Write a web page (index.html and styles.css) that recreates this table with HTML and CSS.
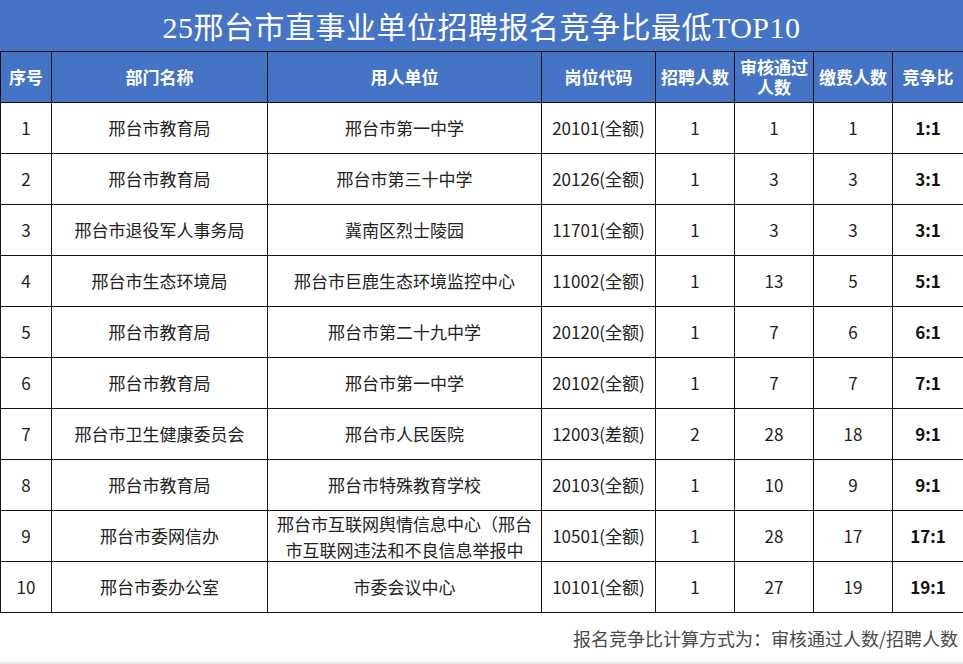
FILE: index.html
```html
<!DOCTYPE html>
<html lang="zh-CN">
<head>
<meta charset="utf-8">
<title>25邢台市直事业单位招聘报名竞争比最低TOP10</title>
<link rel="stylesheet" href="styles.css">
</head>
<body>
<div class="page">
  <div class="title">25邢台市直事业单位招聘报名竞争比最低TOP10</div>
  <table class="grid">
    <colgroup>
      <col class="c1"><col class="c2"><col class="c3"><col class="c4">
      <col class="c5"><col class="c6"><col class="c7"><col class="c8">
    </colgroup>
    <thead>
      <tr>
        <th>序号</th><th>部门名称</th><th>用人单位</th><th>岗位代码</th>
        <th>招聘人数</th><th>审核通过人数</th><th>缴费人数</th><th>竞争比</th>
      </tr>
    </thead>
    <tbody>
      <tr><td>1</td><td>邢台市教育局</td><td>邢台市第一中学</td><td>20101(全额)</td><td>1</td><td>1</td><td>1</td><td class="ratio">1:1</td></tr>
      <tr><td>2</td><td>邢台市教育局</td><td>邢台市第三十中学</td><td>20126(全额)</td><td>1</td><td>3</td><td>3</td><td class="ratio">3:1</td></tr>
      <tr><td>3</td><td>邢台市退役军人事务局</td><td>冀南区烈士陵园</td><td>11701(全额)</td><td>1</td><td>3</td><td>3</td><td class="ratio">3:1</td></tr>
      <tr><td>4</td><td>邢台市生态环境局</td><td>邢台市巨鹿生态环境监控中心</td><td>11002(全额)</td><td>1</td><td>13</td><td>5</td><td class="ratio">5:1</td></tr>
      <tr><td>5</td><td>邢台市教育局</td><td>邢台市第二十九中学</td><td>20120(全额)</td><td>1</td><td>7</td><td>6</td><td class="ratio">6:1</td></tr>
      <tr><td>6</td><td>邢台市教育局</td><td>邢台市第一中学</td><td>20102(全额)</td><td>1</td><td>7</td><td>7</td><td class="ratio">7:1</td></tr>
      <tr><td>7</td><td>邢台市卫生健康委员会</td><td>邢台市人民医院</td><td>12003(差额)</td><td>2</td><td>28</td><td>18</td><td class="ratio">9:1</td></tr>
      <tr><td>8</td><td>邢台市教育局</td><td>邢台市特殊教育学校</td><td>20103(全额)</td><td>1</td><td>10</td><td>9</td><td class="ratio">9:1</td></tr>
      <tr><td>9</td><td>邢台市委网信办</td><td><div class="clip">邢台市互联网舆情信息中心（邢台市互联网违法和不良信息举报中</div></td><td>10501(全额)</td><td>1</td><td>28</td><td>17</td><td class="ratio">17:1</td></tr>
      <tr><td>10</td><td>邢台市委办公室</td><td>市委会议中心</td><td>10101(全额)</td><td>1</td><td>27</td><td>19</td><td class="ratio">19:1</td></tr>
    </tbody>
  </table>
  <div class="note">报名竞争比计算方式为：审核通过人数/招聘人数</div>
</div>
</body>
</html>
```

FILE: styles.css
```css
html, body {
  margin: 0;
  padding: 0;
  background: #ffffff;
}

.page {
  width: 963px;
  height: 664px;
  box-sizing: border-box;
  border-bottom: 2px solid #e6e6e6;
  display: flex;
  flex-direction: column;
  font-family: "Noto Sans CJK SC", "Noto Sans", sans-serif;
}

.title {
  height: 51px;
  background: #4573c5;
  color: #ffffff;
  font-family: "Liberation Serif", "Noto Sans CJK SC", serif;
  font-size: 30px;
  letter-spacing: 0.5px;
  line-height: 56px;
  text-align: center;
  white-space: nowrap;
}

.grid {
  width: 963px;
  table-layout: fixed;
  border-collapse: collapse;
}

.c1 { width: 51px; }
.c2 { width: 216px; }
.c3 { width: 274px; }
.c4 { width: 114px; }
.c5 { width: 79px; }
.c6 { width: 79px; }
.c7 { width: 79px; }
.c8 { width: 71px; }

.grid th,
.grid td {
  border: 1px solid #111111;
  height: 50px;
  padding: 0 2px;
  text-align: center;
  vertical-align: middle;
}

.grid th {
  background: #4573c5;
  color: #ffffff;
  font-size: 17px;
  font-weight: bold;
  line-height: 20px;
}

.grid td {
  color: #222222;
  font-size: 17px;
  line-height: 22px;
}

.grid td.ratio {
  font-weight: bold;
  color: #111111;
}

.clip {
  height: 50px;
  overflow: hidden;
  line-height: 26px;
}

.note {
  flex: 1;
  display: flex;
  align-items: center;
  justify-content: flex-end;
  padding-right: 5px;
  color: #4a4a4a;
  font-size: 18px;
}
```
